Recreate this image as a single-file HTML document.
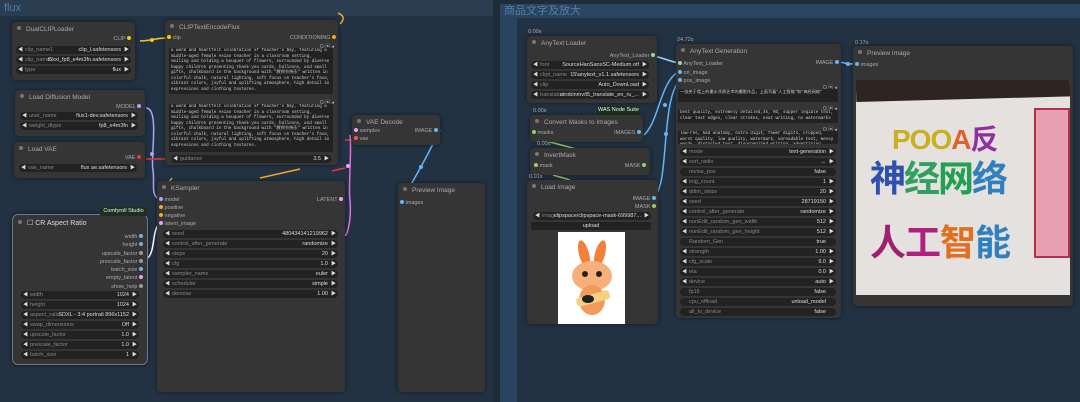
<!DOCTYPE html>
<html><head><meta charset="utf-8"><style>
*{margin:0;padding:0;box-sizing:border-box}
body{width:1080px;height:402px;overflow:hidden;background:#1e2b38;font-family:"Liberation Sans","Noto Sans CJK SC",sans-serif;position:relative}
.g{position:absolute;background:#223242}
.gh{position:absolute;background:#2a3d51;color:#4f7fae;font-size:11px;padding-left:4px;line-height:16px}
.n{position:absolute;background:#353535;border-radius:4px;box-shadow:0 0 4px rgba(0,0,0,.5)}
.t{position:absolute;left:5px;top:4px;color:#aaa;font-size:6.5px;white-space:nowrap}
.t:before{content:"";display:inline-block;width:4px;height:4px;border-radius:50%;background:#777;margin-right:5px;vertical-align:1px}
.w{position:absolute;height:8px;background:#222;border-radius:5px;font-size:5.5px;line-height:8px;color:#888;padding:0 8px 0 9px;white-space:nowrap;overflow:hidden}
.w:before{content:"◀";position:absolute;left:2px;color:#ddd;font-size:5px}
.w:after{content:"▶";position:absolute;right:2px;color:#ddd;font-size:5px}
.w.nb:before,.w.nb:after{content:""}
.w b{position:absolute;right:10px;color:#ddd;font-weight:normal}
.s{position:absolute;font-size:5.5px;color:#aaa;white-space:nowrap}
.d{display:inline-block;width:4px;height:4px;border-radius:50%;vertical-align:0}
.ta{position:absolute;background:#222;color:#ccc;font-family:"Liberation Mono",monospace;font-size:4.2px;line-height:5.5px;padding:1px 2px;overflow:hidden}
.tm{position:absolute;font-size:5.5px;color:#aaa}
</style></head><body>
<div class="g" style="left:0;top:0;width:493px;height:402px"></div>
<div class="gh" style="left:0;top:0;width:493px;height:16px">flux</div>
<div class="g" style="left:500px;top:4px;width:580px;height:398px"></div>
<div style="position:absolute;left:500px;top:4px;width:17px;height:398px;background:#2a4460"></div>
<div class="gh" style="left:500px;top:4px;width:580px;height:14px;line-height:14px;background:#2b4560">商品文字及放大</div>

<svg style="position:absolute;left:0;top:0" width="1080" height="402">
<g fill="none" stroke-width="1.5">
<path d="M140 41 C150 41 155 38 168 38" stroke="#f5c518"/>
<path d="M146 108 C160 108 150 160 153 170 C155 185 150 195 160 200" stroke="#a9a4ff"/>
<path d="M146 159 L165 159" stroke="#e03a3a"/>
<path d="M338 13 C345 16 344 20 340 24" stroke="#f5a623"/>
<path d="M332 171 L345 168" stroke="#e03a3a"/>
<path d="M345 140 L356 140" stroke="#e03a3a"/>
<path d="M350 135 C352 150 348 190 350 200 C352 225 345 240 345 234" stroke="#e070e0"/>
<path d="M440 130 C430 150 420 170 400 203" stroke="#64b5f6"/>
<path d="M172 178 L158 196" stroke="#f5a623"/>
<path d="M260 178 L300 169" stroke="#f5a623"/>
<path d="M148 258 C155 250 152 235 158 225" stroke="#fff"/>
<path d="M653 56 C665 58 670 62 680 63" stroke="#9ed3ff"/>
<path d="M644 135 C660 120 660 80 680 71" stroke="#64b5f6"/>
<path d="M653 197 C670 190 660 100 680 80" stroke="#64b5f6"/>
<path d="M840 62 C848 64 850 64 860 64" stroke="#64b5f6"/>
<path d="M550 142 L580 150" stroke="#9ccc65"/>
<path d="M553 175 L570 180" stroke="#9ccc65"/>
</g>
<g fill="#a9a4ff"><circle cx="152" cy="154" r="2"/></g>
<g fill="#f0a0f0"><circle cx="348" cy="166" r="2"/></g>
<g fill="#64b5f6"><circle cx="421" cy="167" r="2"/><circle cx="665" cy="105" r="2"/><circle cx="666" cy="134" r="2"/><circle cx="848" cy="64" r="2"/></g>
<circle cx="152" cy="40" r="2" fill="#f5c518"/>
</svg>

<div class="n" style="left:12px;top:22px;width:123px;height:58px"><div class="t">DualCLIPLoader</div>
<div class="s" style="right:4px;top:14px">CLIP <span class="d" style="background:#f5c518"></span></div>
<div class="w" style="left:4px;top:24px;width:115px">clip_name1<b>clip_l.safetensors</b></div>
<div class="w" style="left:4px;top:34px;width:115px">clip_name2<b>t5xxl_fp8_e4m3fn.safetensors</b></div>
<div class="w" style="left:4px;top:44px;width:115px">type<b>flux</b></div></div>

<div class="n" style="left:15px;top:90px;width:130px;height:46px"><div class="t">Load Diffusion Model</div>
<div class="s" style="right:4px;top:14px">MODEL <span class="d" style="background:#a9a4ff"></span></div>
<div class="w" style="left:5px;top:22px;width:118px">unet_name<b>flux1-dev.safetensors</b></div>
<div class="w" style="left:5px;top:32px;width:118px">weight_dtype<b>fp8_e4m3fn</b></div></div>

<div class="n" style="left:14px;top:142px;width:131px;height:36px"><div class="t">Load VAE</div>
<div class="s" style="right:4px;top:13px">VAE <span class="d" style="background:#e03a3a"></span></div>
<div class="w" style="left:5px;top:22px;width:118px">vae_name<b>flux ae.safetensors</b></div></div>

<div class="n" style="left:165px;top:20px;width:173px;height:145px"><div class="t">CLIPTextEncodeFlux</div>
<div class="s" style="left:2px;top:15px"><span class="d" style="background:#f5c518"></span> clip</div>
<div class="s" style="right:2px;top:15px">CONDITIONING <span class="d" style="background:#f5a623"></span></div>
<div class="s" style="right:4px;top:23px;font-size:5px">O ▣ ◂</div>
<div class="ta" style="left:4px;top:28px;width:164px;height:46px">a warm and heartfelt celebration of Teacher's Day, featuring a middle-aged female Asian teacher in a classroom setting, smiling and holding a bouquet of flowers, surrounded by diverse happy children presenting thank-you cards, balloons, and small gifts, chalkboard in the background with "教师节快乐" written in colorful chalk, natural lighting, soft focus on teacher's face, vibrant colors, joyful and uplifting atmosphere, high detail in expressions and clothing textures.</div>
<div class="s" style="right:4px;top:79px;font-size:5px">O ▣ ◂</div>
<div class="ta" style="left:4px;top:84px;width:164px;height:48px">a warm and heartfelt celebration of Teacher's Day, featuring a middle-aged female Asian teacher in a classroom setting, smiling and holding a bouquet of flowers, surrounded by diverse happy children presenting thank-you cards, balloons, and small gifts, chalkboard in the background with "教师节快乐" written in colorful chalk, natural lighting, soft focus on teacher's face, vibrant colors, joyful and uplifting atmosphere, high detail in expressions and clothing textures.</div>
<div class="w" style="left:6px;top:135px;width:160px">guidance<b>3.5</b></div></div>

<div class="n" style="left:352px;top:115px;width:88px;height:30px"><div class="t">VAE Decode</div>
<div class="s" style="left:2px;top:13px"><span class="d" style="background:#f0a0f0"></span> samples</div>
<div class="s" style="left:2px;top:21px"><span class="d" style="background:#e0663a"></span> vae</div>
<div class="s" style="right:2px;top:13px">IMAGE <span class="d" style="background:#64b5f6"></span></div></div>

<div class="n" style="left:157px;top:181px;width:188px;height:211px"><div class="t">KSampler</div>
<div class="s" style="left:2px;top:16px"><span class="d" style="background:#a9a4ff"></span> model</div>
<div class="s" style="left:2px;top:24px"><span class="d" style="background:#f5a623"></span> positive</div>
<div class="s" style="left:2px;top:32px"><span class="d" style="background:#f5a623"></span> negative</div>
<div class="s" style="left:2px;top:40px"><span class="d" style="background:#f0a0f0"></span> latent_image</div>
<div class="s" style="right:2px;top:16px">LATENT <span class="d" style="background:#f0a0f0"></span></div>
<div class="w" style="left:6px;top:49px;width:175px">seed<b>480434141219962</b></div>
<div class="w" style="left:6px;top:59px;width:175px">control_after_generate<b>randomize</b></div>
<div class="w" style="left:6px;top:69px;width:175px">steps<b>20</b></div>
<div class="w" style="left:6px;top:79px;width:175px">cfg<b>1.0</b></div>
<div class="w" style="left:6px;top:89px;width:175px">sampler_name<b>euler</b></div>
<div class="w" style="left:6px;top:99px;width:175px">scheduler<b>simple</b></div>
<div class="w" style="left:6px;top:109px;width:175px">denoise<b>1.00</b></div></div>

<div class="n" style="left:398px;top:183px;width:87px;height:209px"><div class="t">Preview Image</div>
<div class="s" style="left:2px;top:17px"><span class="d" style="background:#64b5f6"></span> images</div></div>

<div class="n" style="left:12px;top:214px;width:136px;height:151px;border:1px solid #6a7a8a;border-radius:6px"><div class="t" style="color:#ddd;font-size:7px">☐ CR Aspect Ratio</div>
<div class="s" style="right:4px;top:18px;text-align:right;line-height:8.3px">width <span class="d" style="background:#64b5f6"></span><br>height <span class="d" style="background:#64b5f6"></span><br>upscale_factor <span class="d" style="background:#999"></span><br>prescale_factor <span class="d" style="background:#999"></span><br>batch_size <span class="d" style="background:#64b5f6"></span><br>empty_latent <span class="d" style="background:#f0a0f0"></span><br>show_help <span class="d" style="background:#999"></span></div>
<div class="w" style="left:8px;top:76px;width:118px">width<b>1024</b></div>
<div class="w" style="left:8px;top:86px;width:118px">height<b>1024</b></div>
<div class="w" style="left:8px;top:96px;width:118px">aspect_ratio<b>SDXL - 3:4 portrait 896x1152</b></div>
<div class="w" style="left:8px;top:106px;width:118px">swap_dimensions<b>Off</b></div>
<div class="w" style="left:8px;top:116px;width:118px">upscale_factor<b>1.0</b></div>
<div class="w" style="left:8px;top:126px;width:118px">prescale_factor<b>1.0</b></div>
<div class="w" style="left:8px;top:136px;width:118px">batch_size<b>1</b></div></div>
<div style="position:absolute;left:100px;top:207px;width:47px;height:9px;background:#1f2f1f;color:#dfe;font-size:5.5px;line-height:9px;text-align:center;border-radius:2px">Comfyroll Studio</div>

<div class="tm" style="left:528px;top:29px">0.00s</div>
<div class="n" style="left:527px;top:36px;width:130px;height:67px"><div class="t">AnyText Loader</div>
<div class="s" style="right:2px;top:17px">AnyText_Loader <span class="d" style="background:#9ed3a0"></span></div>
<div class="w" style="left:4px;top:25px;width:118px">font<b>SourceHanSansSC-Medium.otf</b></div>
<div class="w" style="left:4px;top:35px;width:118px">ckpt_name<b>15\anytext_v1.1.safetensors</b></div>
<div class="w" style="left:4px;top:45px;width:118px">clip<b>Auto_DownLoad</b></div>
<div class="w" style="left:4px;top:55px;width:118px">translator<b>utrobinmv/t5_translate_en_ru_...</b></div></div>

<div class="tm" style="left:533px;top:108px">0.00s</div>
<div style="position:absolute;left:597px;top:106px;width:43px;height:9px;background:#1f2f1f;color:#dfe;font-size:5.5px;line-height:9px;text-align:center">WAS Node Suite</div>
<div class="n" style="left:530px;top:115px;width:113px;height:27px"><div class="t">Convert Masks to Images</div>
<div class="s" style="left:2px;top:15px"><span class="d" style="background:#9ccc65"></span> masks</div>
<div class="s" style="right:2px;top:15px">IMAGES <span class="d" style="background:#64b5f6"></span></div></div>
<div class="tm" style="left:537px;top:141px">0.00s</div>
<div class="n" style="left:530px;top:148px;width:120px;height:27px"><div class="t">InvertMask</div>
<div class="s" style="left:4px;top:15px"><span class="d" style="background:#9ccc65"></span> mask</div>
<div class="s" style="right:4px;top:15px">MASK <span class="d" style="background:#9ccc65"></span></div></div>
<div class="tm" style="left:529px;top:174px">0.01s</div>
<div class="n" style="left:527px;top:180px;width:131px;height:144px"><div class="t">Load Image</div>
<div class="s" style="right:2px;top:15px;text-align:right;line-height:8px">IMAGE <span class="d" style="background:#64b5f6"></span><br>MASK <span class="d" style="background:#9ccc65"></span></div>
<div class="w" style="left:6px;top:32px;width:118px">image<b>clipspace/clipspace-mask-699987...</b></div>
<div class="w nb" style="left:4px;top:42px;width:120px;border-radius:1px;text-align:center;color:#ddd;padding:0">upload</div>
<div style="position:absolute;left:31px;top:52px;width:67px;height:92px;background:#fff">
<svg width="67" height="92"><ellipse cx="26" cy="22" rx="5" ry="14" fill="#f0803a" transform="rotate(-15 26 22)"/><ellipse cx="42" cy="22" rx="5" ry="14" fill="#f0803a" transform="rotate(15 42 22)"/><ellipse cx="34" cy="44" rx="20" ry="15" fill="#f7b07a"/><circle cx="27" cy="42" r="3" fill="#222"/><circle cx="41" cy="42" r="3" fill="#222"/><ellipse cx="34" cy="68" rx="13" ry="15" fill="#f39a5a"/><rect x="18" y="62" width="34" height="9" rx="3" fill="#f5d080" transform="rotate(-15 35 66)"/><ellipse cx="30" cy="67" rx="6" ry="4" fill="#222"/></svg></div></div>

<div class="tm" style="left:677px;top:37px">24.72s</div>
<div class="n" style="left:676px;top:44px;width:165px;height:274px"><div class="t">AnyText Generation</div>
<div class="s" style="left:2px;top:16px;line-height:8.5px"><span class="d" style="background:#9ed3a0"></span> AnyText_Loader<br><span class="d" style="background:#64b5f6"></span> ori_image<br><span class="d" style="background:#64b5f6"></span> pos_image</div>
<div class="s" style="right:2px;top:16px">IMAGE <span class="d" style="background:#64b5f6"></span></div>
<div class="s" style="right:4px;top:40px;font-size:5px">O ▣ ◂</div>
<div class="ta" style="left:2px;top:45px;width:160px;height:13px;font-family:'Noto Sans CJK SC',sans-serif">一张关于墙上的墨水涂鸦艺术的摄影作品，上面写着"人工智能"和"神经网络"</div>
<div class="s" style="right:4px;top:61px;font-size:5px">O ▣ ◂</div>
<div class="ta" style="left:2px;top:66px;width:160px;height:13px">best quality, extremely detailed,4k, HD, supper legible text, clear text edges, clear strokes, neat writing, no watermarks</div>
<div class="s" style="right:4px;top:82px;font-size:5px">O ▣ ◂</div>
<div class="ta" style="left:2px;top:87px;width:160px;height:13px">low-res, bad anatomy, extra digit, fewer digits, cropped, worst quality, low quality, watermark, unreadable text, messy words, distorted text, disorganized writing, advertising picture</div>
<div class="w" style="left:4px;top:104px;width:156px">mode<b>text-generation</b></div>
<div class="w" style="left:4px;top:114px;width:156px">sort_radio<b>↔</b></div>
<div class="w nb" style="left:4px;top:124px;width:156px">revise_pos<b>false</b></div>
<div class="w" style="left:4px;top:134px;width:156px">img_count<b>1</b></div>
<div class="w" style="left:4px;top:144px;width:156px">ddim_steps<b>20</b></div>
<div class="w" style="left:4px;top:154px;width:156px">seed<b>28719150</b></div>
<div class="w" style="left:4px;top:164px;width:156px">control_after_generate<b>randomize</b></div>
<div class="w" style="left:4px;top:174px;width:156px">nonEdit_random_gen_width<b>512</b></div>
<div class="w" style="left:4px;top:184px;width:156px">nonEdit_random_gen_height<b>512</b></div>
<div class="w nb" style="left:4px;top:194px;width:156px">Random_Gen<b>true</b></div>
<div class="w" style="left:4px;top:204px;width:156px">strength<b>1.00</b></div>
<div class="w" style="left:4px;top:214px;width:156px">cfg_scale<b>9.0</b></div>
<div class="w" style="left:4px;top:224px;width:156px">eta<b>0.0</b></div>
<div class="w" style="left:4px;top:234px;width:156px">device<b>auto</b></div>
<div class="w nb" style="left:4px;top:244px;width:156px">fp16<b>false</b></div>
<div class="w nb" style="left:4px;top:254px;width:156px">cpu_offload<b>unload_model</b></div>
<div class="w nb" style="left:4px;top:264px;width:156px">all_to_device<b>false</b></div></div>

<div class="tm" style="left:855px;top:40px">0.17s</div>
<div class="n" style="left:853px;top:46px;width:220px;height:260px"><div class="t">Preview Image</div>
<div class="s" style="left:2px;top:16px"><span class="d" style="background:#64b5f6"></span> images</div>
<div style="position:absolute;left:3px;top:34px;width:214px;height:215px;background:#e4e1de;overflow:hidden">
<div style="position:absolute;left:0;top:-4px;width:214px;height:26px;background:#2f2520;transform:rotate(-1.5deg);transform-origin:left"></div>
<div style="position:absolute;left:178px;top:28px;width:36px;height:150px;background:#e9a0b0;border:2px solid #b03050"></div>
<div style="position:absolute;left:36px;top:38px;font-size:28px;font-weight:bold;color:#c8b020;letter-spacing:-1px">POO<span style="color:#e06030">A</span><span style="color:#9030a0">反</span></div>
<div style="position:absolute;left:14px;top:76px;font-size:36px;font-weight:bold;font-family:'Noto Sans CJK SC',sans-serif;letter-spacing:-2px;line-height:40px"><span style="color:#3050b0">神</span><span style="color:#30a060">经</span><span style="color:#20a050">网</span><span style="color:#3080c0">络</span></div>
<div style="position:absolute;left:14px;top:140px;font-size:36px;font-weight:bold;font-family:'Noto Sans CJK SC',sans-serif;letter-spacing:-1px;line-height:40px"><span style="color:#a02070">人</span><span style="color:#b02080">工</span><span style="color:#e07020">智</span><span style="color:#3080c0">能</span></div>
</div></div>
</body></html>
